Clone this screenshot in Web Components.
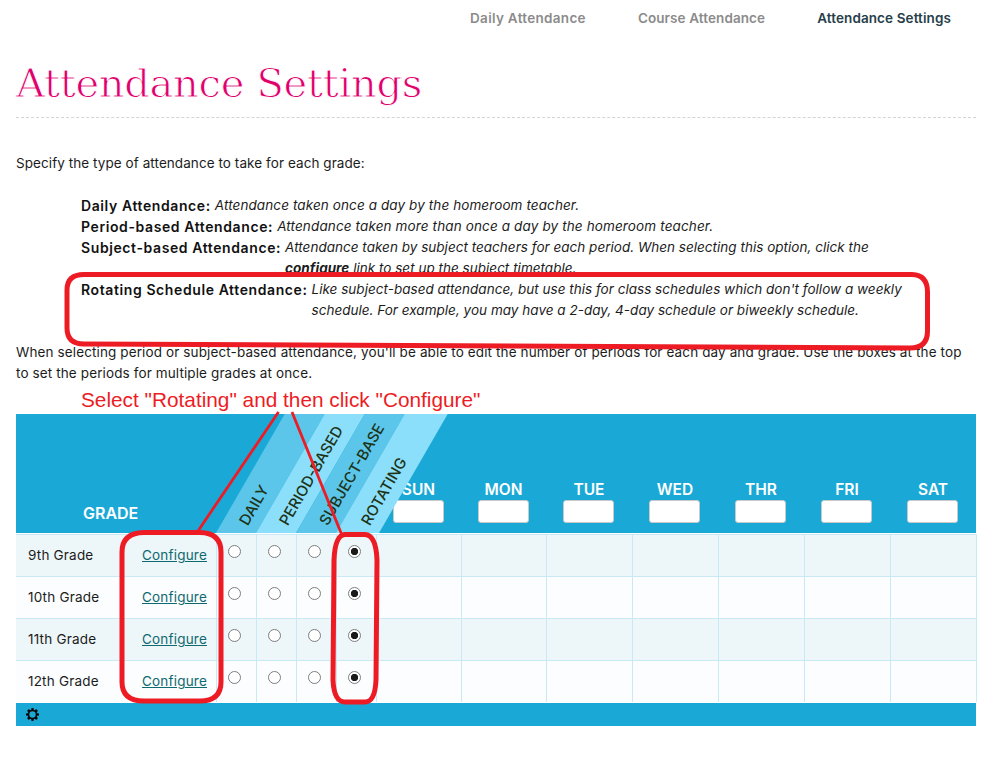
<!DOCTYPE html>
<html>
<head>
<meta charset="utf-8">
<title>Attendance Settings</title>
<style>
  html, body { margin: 0; padding: 0; background: #fff; }
  body { position: relative; width: 998px; height: 777px; overflow: hidden;
         font: 13.5px Inter, "Liberation Sans", sans-serif; color: #1c1c1c; }
</style>
</head>
<body>
<att-nav>
  <a>Daily Attendance</a>
  <a>Course Attendance</a>
  <a class="on">Attendance Settings</a>
</att-nav>
<att-title>Attendance Settings</att-title>
<att-intro></att-intro>
<att-grid></att-grid>
<att-callouts></att-callouts>

<script>
// top right tabs
class AttNav extends HTMLElement {
  constructor(){
    super();
    this.attachShadow({mode:'open'}).innerHTML = `
    <style>
      :host { display:flex; justify-content:flex-end; gap:52px; height:36px; padding:0 47px 0 0; box-sizing:border-box;
              align-items:center; font:600 13.5px Inter, "Liberation Sans", sans-serif; letter-spacing:.1px; color:#8b8b8b; }
      ::slotted(a:first-child) { letter-spacing:.3px; }
      ::slotted(a.on) { color:#27404a; }
    </style>
    <slot></slot>`;
  }
}
customElements.define('att-nav', AttNav);

class AttTitle extends HTMLElement {
  constructor(){
    super();
    this.attachShadow({mode:'open'}).innerHTML = `
    <style>
      :host { display:block; margin:0 22px 0 16px; height:81px; border-bottom:1px dashed #d4d4d4; box-sizing:content-box; }
      h1 { margin:0; padding-top:22px; font:400 40px/50px "DejaVu Serif", serif; letter-spacing:-.3px; color:#e0006c;
           -webkit-text-stroke:.9px #fff; }
    </style>
    <h1><slot></slot></h1>`;
  }
}
customElements.define('att-title', AttTitle);

const introTpl = document.createElement('template');
introTpl.innerHTML = `
<style>
  :host { display:block; padding:0 16px; font:13.5px/21px Inter, "Liberation Sans", sans-serif; color:#1c1c1c; }
  p { margin:0; letter-spacing:.12px; white-space:nowrap; }
  .lead { padding-top:35px; letter-spacing:.07px; }
  dl { margin:21px 0 21px 65px; }
  .item { display:flex; gap:4px; }
  dt { font-weight:600; font-size:14px; letter-spacing:.6px; color:#111; white-space:nowrap; }
  dd { margin:0; font-style:italic; letter-spacing:var(--t,.05px); white-space:nowrap; }
  dd b { font-weight:700; }
</style>
<p class="lead">Specify the type of attendance to take for each grade:</p>
<dl>
  <div class="item" style="--t:.1px"><dt>Daily Attendance:</dt><dd>Attendance taken once a day by the homeroom teacher.</dd></div>
  <div class="item" style="--t:.13px"><dt>Period-based Attendance:</dt><dd>Attendance taken more than once a day by the homeroom teacher.</dd></div>
  <div class="item" style="--t:.02px"><dt>Subject-based Attendance:</dt><dd>Attendance taken by subject teachers for each period. When selecting this option, click the<br><b>configure</b> link to set up the subject timetable.</dd></div>
  <div class="item" style="--t:.02px"><dt>Rotating Schedule Attendance:</dt><dd>Like subject-based attendance, but use this for class schedules which don't follow a weekly<br>schedule. For example, you may have a 2-day, 4-day schedule or biweekly schedule.</dd></div>
</dl>
<p>When selecting period or subject-based attendance, you'll be able to edit the number of periods for each day and grade. Use the boxes at the top<br>to set the periods for multiple grades at once.</p>`;
class AttIntro extends HTMLElement {
  constructor(){
    super();
    this.attachShadow({mode:'open'}).appendChild(introTpl.content.cloneNode(true));
  }
}
customElements.define('att-intro', AttIntro);

// slanted column head, the whole box is skewed and the label rotated back
class AttSlant extends HTMLElement {
  constructor(){
    super();
    this.attachShadow({mode:'open'}).innerHTML = `
    <style>
      :host { display:flex; align-items:flex-end; justify-content:center; height:100%; overflow:visible;
              transform:skewX(-30deg); transform-origin:left bottom; background:var(--band,#5bc6ea); }
      span { display:block; width:0; height:0; margin:0 0 13px -14px; white-space:nowrap; color:#1e3418; font:500 15px/15px Inter, "Liberation Sans", sans-serif;
             transform:skewX(30deg) rotate(-60deg); transform-origin:left bottom; }
    </style>
    <span><slot></slot></span>`;
  }
}
customElements.define('att-slant', AttSlant);

class AttDay extends HTMLElement {
  constructor(){
    super();
    this.attachShadow({mode:'open'}).innerHTML = `
    <style>
      :host { display:flex; flex-direction:column; justify-content:flex-end; align-items:center; padding-bottom:10px; box-sizing:border-box;
              font:600 15.5px/20px Inter, "Liberation Sans", sans-serif; color:#fff; }
      input { display:block; width:51px; height:23px; box-sizing:border-box; margin:0 1px 0 0; padding:0; border:1px solid #c9c9c9; border-radius:3px; background:#fff; }
    </style>
    <slot></slot><input type="text">`;
  }
}
customElements.define('att-day', AttDay);

class AttRadio extends HTMLElement {
  constructor(){
    super();
    const on = this.hasAttribute('checked');
    this.attachShadow({mode:'open'}).innerHTML = `
    <style>
      :host { display:flex; justify-content:center; padding:10px 4px 0 0; box-sizing:border-box; border-left:1px solid var(--line); }
      i { display:block; width:13px; height:13px; box-sizing:border-box; border:1px solid #7f7f7f; border-radius:50%;
          background:radial-gradient(circle, ${on ? '#1a1a1a 0 3.4px, #fff 3.9px' : '#fff 0, #fff 100%'}); }
    </style>
    <i></i>`;
  }
}
customElements.define('att-radio', AttRadio);

const COLS = '114px 86px 40px 40px 40px 40px 85px 85px repeat(4, 86px) 1fr';

class AttRow extends HTMLElement {
  constructor(){
    super();
    const days = Array(7).fill('<div class="d"></div>').join('');
    this.attachShadow({mode:'open'}).innerHTML = `
    <style>
      :host { display:grid; grid-template-columns:${COLS}; height:42px; box-sizing:border-box; margin-right:-1px;
              --line:#c9e9f4; border-top:1px solid var(--line); background:var(--row,#fbfdfe); font:13.5px/41px Inter, "Liberation Sans", sans-serif; letter-spacing:.2px; color:#1c1c1c; }
      .g { padding-left:12px; white-space:nowrap; }
      .c { padding-left:12px; white-space:nowrap; }
      a { color:#0f6a70; text-decoration:underline; }
      .d { border-left:1px solid var(--line); }
      .d:last-child { border-right:1px solid var(--line); }
    </style>
    <div class="g"><slot></slot></div>
    <div class="c"><a>Configure</a></div>
    <att-radio></att-radio><att-radio></att-radio><att-radio></att-radio><att-radio checked></att-radio>
    ${days}`;
  }
}
customElements.define('att-row', AttRow);

class AttGrid extends HTMLElement {
  constructor(){
    super();
    const days = ['SUN','MON','TUE','WED','THR','FRI','SAT'].map(d=>`<att-day>${d}</att-day>`).join('');
    const rows = ['9th Grade','10th Grade','11th Grade','12th Grade']
      .map((g,i)=>`<att-row style="--row:${i%2?'#fbfdfe':'#edf6f9'}">${g}</att-row>`).join('');
    this.attachShadow({mode:'open'}).innerHTML = `
    <style>
      :host { display:block; margin:30px 22px 0 16px; }
      .head { display:grid; grid-template-columns:${COLS}; height:119px; margin-bottom:1px; background:#1aa9d6; }
      .grade { grid-column:1 / 3; align-self:end; padding:0 0 10px 67px; font:600 16px/20px Inter, "Liberation Sans", sans-serif; color:#fff; }
      .foot { height:23px; margin-top:1px; background:#1aa9d6; display:flex; align-items:center; padding-left:10px; }
      svg { display:block; }
    </style>
    <div class="head">
      <div class="grade">GRADE</div>
      <att-slant style="--band:#5bc6ea">DAILY</att-slant>
      <att-slant style="--band:#8cdffa">PERIOD-BASED</att-slant>
      <att-slant style="--band:#5bc6ea">SUBJECT-BASE</att-slant>
      <att-slant style="--band:#8cdffa;margin-right:-3px">ROTATING</att-slant>
      ${days}
    </div>
    ${rows}
    <div class="foot">
      <svg width="13" height="13" viewBox="0 0 14 14"><path fill="#0b0b0b" fill-rule="evenodd" d="M5.900 0h2.200l.3 1.900 1 .4L11 1.200l1.800 1.800-1.100 1.600.4 1 1.900.3v2.200l-1.900.3-.4 1 1.100 1.600-1.800 1.800-1.600-1.100-1 .4-.3 1.900H5.900l-.3-1.900-1-.4L3 12.800 1.200 11l1.100-1.600-.4-1L0 8.100V5.900l1.900-.3.4-1L1.200 3 3 1.200l1.600 1.100 1-.4zM7 3.600a3.400 3.400 0 1 0 0 6.800 3.400 3.400 0 0 0 0-6.800z"/></svg>
    </div>`;
  }
}
customElements.define('att-grid', AttGrid);

// red markup drawn on top of the screenshot
class AttCallouts extends HTMLElement {
  constructor(){
    super();
    this.attachShadow({mode:'open'}).innerHTML = `
    <style>
      :host { position:absolute; left:0; top:0; width:998px; height:777px; pointer-events:none; }
      svg { position:absolute; left:0; top:0; }
      div { position:absolute; left:81px; top:388px; font:20.8px/24px "Liberation Sans", sans-serif; color:#ed1c24; white-space:nowrap; }
    </style>
    <svg width="998" height="777" fill="none" stroke="#ed1c24" stroke-width="5" stroke-linejoin="round">
      <path d="M84 274.500H912Q927.500 275 927.500 292V331Q927.500 348 910 348L84 344Q67 344 67 328V290Q67 274.500 84 274.500Z"/>
      <path d="M144 532.500H200Q221 533 221 552V682Q221 701 200 701H144Q122 701 122 682V552Q122 533 144 532.500Z"/>
      <path d="M345 534.500H365Q376 535 377 560L376 680Q375 702 365 702H345Q334 702 333 680L334 560Q335 535 345 534.500Z"/>
      <path stroke-width="2.800" d="M278.500 412L198 531"/>
      <path stroke-width="2.800" d="M292 412L341.500 534"/>
    </svg>
    <div>Select "Rotating" and then click "Configure"</div>`;
  }
}
customElements.define('att-callouts', AttCallouts);
</script>
</body>
</html>
